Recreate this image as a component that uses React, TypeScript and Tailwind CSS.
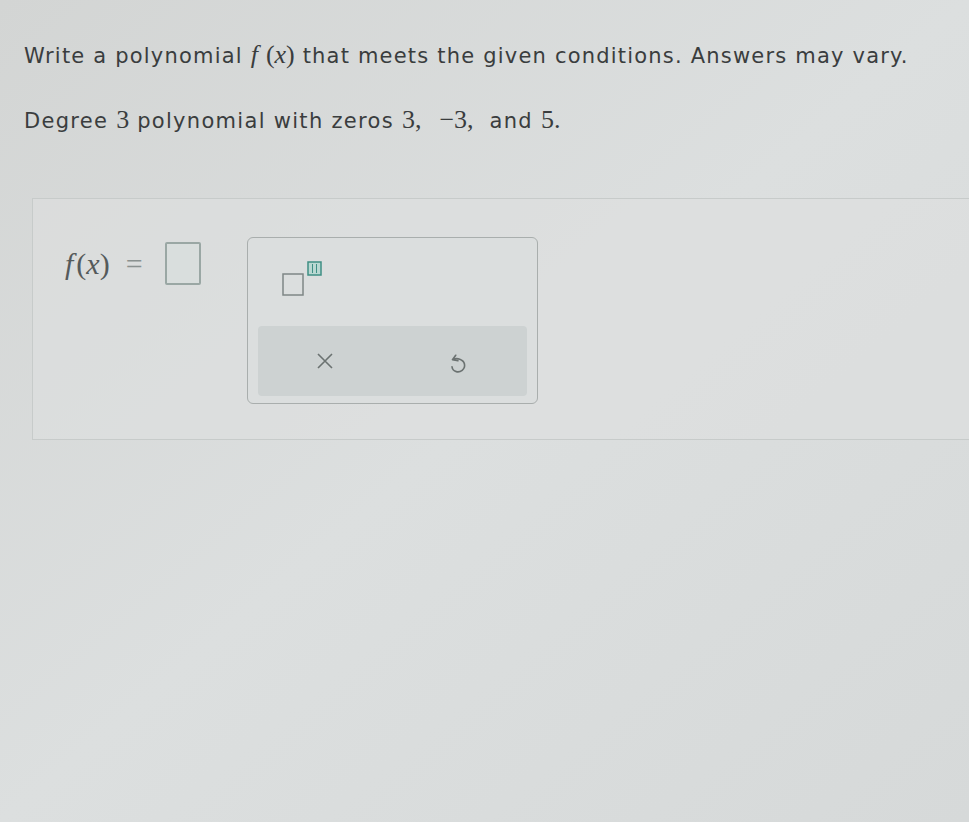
import React from "react";

// Polynomial question card with a small math keypad

function SuperscriptIcon() {
  return (
    <svg width="44" height="38" viewBox="0 0 44 38" aria-hidden="true">
      <rect x="1" y="14" width="20" height="21" fill="none" stroke="#7f8786" strokeWidth="1.5" />
      <rect x="26" y="2" width="13" height="13" fill="#b9d8d2" stroke="#3f8f84" strokeWidth="1.5" />
      <line x1="30.5" y1="4" x2="30.5" y2="13" stroke="#3f8f84" strokeWidth="1" />
      <line x1="34.5" y1="4" x2="34.5" y2="13" stroke="#3f8f84" strokeWidth="1" />
    </svg>
  );
}

function UndoIcon() {
  return (
    <svg width="22" height="24" viewBox="0 0 20 22" aria-hidden="true">
      <path
        d="M7 3 L4 7 L9 8 M4.5 7 C8 5 14 6.5 15 11 C16 16 11 19 7.5 18 C5 17.3 3.8 15.5 3.6 13.5"
        fill="none"
        stroke="#6b7271"
        strokeWidth="1.5"
        strokeLinecap="round"
        strokeLinejoin="round"
      />
    </svg>
  );
}

export default function App() {
  const serif = "font-['Liberation_Serif','DejaVu_Serif',serif] tracking-normal";
  return (
    <div className="min-h-[822px] w-full bg-gradient-to-br from-[#d3d5d4] via-[#dcdfdf] to-[#d6d9d9] font-['DejaVu_Sans','Verdana',sans-serif] text-[#3a3d3e]">
      <div className="px-6 pt-[40px]">
        <p className="text-[21px] leading-[30px] tracking-[1.2px]">
          Write a polynomial{" "}
          <span className={`${serif} text-[26px] italic`}>f</span>{" "}
          <span className={`${serif} text-[26px]`}>(</span>
          <span className={`${serif} text-[26px] italic`}>x</span>
          <span className={`${serif} text-[26px]`}>)</span> that meets the given conditions. Answers may vary.
        </p>
        <p className="mt-[34px] text-[21px] leading-[30px] tracking-[1.3px]">
          Degree <span className={`${serif} text-[26px]`}>3</span> polynomial with zeros{" "}
          <span className={`${serif} text-[26px]`}>3,</span>{"  "}
          <span className={`${serif} ml-[10px] text-[26px]`}>−3,</span>{" "}
          <span className="ml-[8px]">and</span>{" "}
          <span className={`${serif} text-[26px]`}>5.</span>
        </p>
      </div>

      <div className="ml-8 mt-[62px] h-[242px] border-t border-l border-b border-[#c7cbca] bg-[#dde0e0]/60 pl-[32px] pt-[38px]">
        <div className="flex items-start gap-[46px]">
          <div className={`${serif} flex items-center pt-[4px] text-[30px] text-[#555a5b]`}>
            <span className="italic">f</span>
            <span className="ml-[3px]">(</span>
            <span className="italic">x</span>
            <span>)</span>
            <span className="ml-[16px] text-[#8a9190]">=</span>
            <span className="ml-[22px] inline-block h-[43px] w-[36px] rounded-[2px] border-2 border-[#9aa7a4] bg-[#d9dedd]" />
          </div>

          <div className="h-[167px] w-[291px] rounded-[6px] border border-[#a9aead] bg-[#dbdede] px-[10px] pt-[22px]">
            <div className="pl-[24px]">
              <SuperscriptIcon />
            </div>
            <div className="mt-[28px] flex h-[70px] items-center rounded-sm bg-[#cdd2d2]">
              <button type="button" className="flex w-1/2 justify-center">
                <svg width="18" height="18" viewBox="0 0 18 18" aria-hidden="true">
                  <path d="M2 2 L16 16 M16 2 L2 16" stroke="#6b7271" strokeWidth="1.6" />
                </svg>
              </button>
              <button type="button" className="flex w-1/2 justify-center pt-[6px]">
                <UndoIcon />
              </button>
            </div>
          </div>
        </div>
      </div>
    </div>
  );
}
